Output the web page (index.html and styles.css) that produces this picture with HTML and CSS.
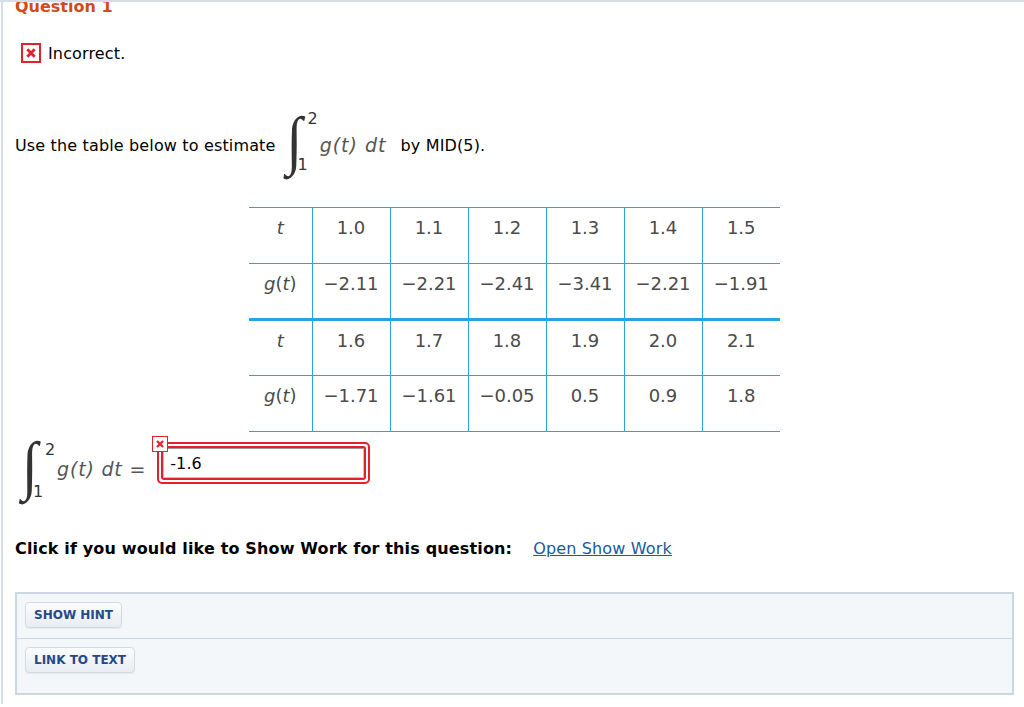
FILE: index.html
```html
<!DOCTYPE html>
<html>
<head>
<meta charset="utf-8">
<link rel="stylesheet" href="styles.css">
</head>
<body>
<div class="page">
  <div class="q-title">Question 1</div>

  <div class="status">
    <span class="x-box"><svg width="12" height="12" viewBox="0 0 12 12"><path d="M2.3 2.3 L9.7 9.7 M9.7 2.3 L2.3 9.7" stroke="#e1212b" stroke-width="2.8" stroke-linecap="butt"/></svg></span>
    <span class="status-text">Incorrect.</span>
  </div>

  <div class="prompt">
    <span class="prompt-text">Use the table below to estimate</span>
    <span class="integral small-int">
      <span class="int-sign">∫</span>
      <span class="limits"><span class="lim-up">2</span><span class="lim-lo">1</span></span>
      <span class="integrand">g(t) dt</span>
    </span>
    <span class="prompt-text">by MID(5).</span>
  </div>

  <div class="table-wrap">
    <table class="data">
      <colgroup><col class="c-head"><col class="c-val"><col class="c-val"><col class="c-val"><col class="c-val"><col class="c-val"><col class="c-val"></colgroup>
      <tr><td class="head"><i>t</i></td><td>1.0</td><td>1.1</td><td>1.2</td><td>1.3</td><td>1.4</td><td>1.5</td></tr>
      <tr class="split"><td class="head"><i>g</i>(<i>t</i>)</td><td>−2.11</td><td>−2.21</td><td>−2.41</td><td>−3.41</td><td>−2.21</td><td>−1.91</td></tr>
      <tr><td class="head"><i>t</i></td><td>1.6</td><td>1.7</td><td>1.8</td><td>1.9</td><td>2.0</td><td>2.1</td></tr>
      <tr><td class="head"><i>g</i>(<i>t</i>)</td><td>−1.71</td><td>−1.61</td><td>−0.05</td><td>0.5</td><td>0.9</td><td>1.8</td></tr>
    </table>
  </div>

  <div class="answer">
    <span class="integral big-int">
      <span class="int-sign">∫</span>
      <span class="limits"><span class="lim-up">2</span><span class="lim-lo">1</span></span>
      <span class="integrand">g(t) dt =</span>
    </span>
    <span class="field">
      <span class="field-inner"><span class="input">-1.6</span></span>
      <span class="mini-x"><svg width="10" height="10" viewBox="0 0 10 10"><path d="M2 2 L8 8 M8 2 L2 8" stroke="#e1212b" stroke-width="2.2"/></svg></span>
    </span>
  </div>

  <div class="showwork">
    <span class="sw-label">Click if you would like to Show Work for this question:</span>
    <a class="sw-link" href="#">Open Show Work</a>
  </div>

  <div class="panel">
    <div class="panel-row first"><span class="btn">SHOW HINT</span></div>
    <div class="panel-row last"><span class="btn">LINK TO TEXT</span></div>
  </div>
</div>
</body>
</html>
```

FILE: styles.css
```css
html, body {
  margin: 0;
  padding: 0;
  background: #ffffff;
}
body {
  border-top: 2px solid #d5dde6;
  height: 705px;
  overflow: hidden;
  font-family: "DejaVu Sans", Verdana, sans-serif;
  color: #000;
  letter-spacing: 0.15px;
}
.page {
  margin-left: 1px;
  border-left: 2px solid #d5dde6;
  padding: 0 10px 0 12px;
  height: 705px;
}
.q-title {
  font-weight: bold;
  font-size: 16px;
  line-height: 16px;
  height: 16px;
  color: #d24a1a;
  margin-top: -3px;
  letter-spacing: 0;
}
.status {
  display: flex;
  align-items: center;
  margin-top: 28px;
  margin-left: 6px;
  height: 20px;
}
.x-box {
  width: 16px;
  height: 16px;
  border: 2px solid #e1212b;
  display: flex;
  align-items: center;
  justify-content: center;
  background: #fff;
}
.status-text {
  font-size: 16px;
  margin-left: 7px;
}
.prompt {
  display: flex;
  align-items: center;
  margin-top: 47px;
  height: 70px;
}
.prompt-text {
  font-size: 16px;
}
.integral {
  display: inline-flex;
  align-items: center;
  color: #444;
  letter-spacing: 0;
}
.small-int {
  margin-left: 11px;
  margin-right: 14px;
}
.int-sign {
  font-family: "Liberation Serif", "Times New Roman", serif;
  font-size: 58px;
  line-height: 62px;
  height: 62px;
  display: inline-block;
  transform: scaleY(1.12);
  color: #333;
  margin-top: -8px;
}
.limits {
  display: inline-flex;
  flex-direction: column;
  justify-content: space-between;
  height: 62px;
  font-size: 16px;
  line-height: 16px;
  color: #333;
  margin-top: -6px;
}
.lim-up { margin-left: 5px; }
.lim-lo { margin-left: -5px; }
.integrand {
  font-size: 19px;
  font-style: italic;
  color: #555;
  margin-left: 2px;
  letter-spacing: 1px;
}
.table-wrap {
  display: flex;
  justify-content: center;
  margin-top: 27px;
}
.data {
  border-collapse: collapse;
  table-layout: fixed;
  width: 531px;
  font-family: "DejaVu Sans", sans-serif;
  font-size: 18px;
  color: #4a4a4a;
  letter-spacing: 0;
}
.c-head { width: 63px; }
.c-val { width: 78px; }
.data td {
  border: 1px solid #27a4e0;
  height: 56px;
  padding: 9px 0 0 0;
  vertical-align: top;
  text-align: center;
  line-height: 22px;
  box-sizing: border-box;
}
.data td:first-child { border-left: none; }
.data td:last-child { border-right: none; }
.data tr.split td { border-bottom: 3px solid #27a4e0; }
.answer {
  display: flex;
  align-items: center;
  margin-top: 4px;
  height: 54px;
  padding-left: 7px;
}
.big-int .int-sign { margin-top: 6px; }
.big-int .limits { height: 58px; margin-top: 16px; }
.big-int .lim-up { margin-left: 7px; }
.big-int .integrand { margin-top: 12px; letter-spacing: 0.8px; }
.field {
  position: relative;
  margin-left: 11px;
  display: inline-block;
  border: 2px solid #e1212b;
  border-radius: 5px;
  padding: 2px;
  background: #fff;
}
.field-inner {
  display: block;
  border: 2px solid #e1212b;
  border-radius: 3px;
}
.input {
  display: block;
  width: 193px;
  height: 28px;
  border: 1px solid #c4c4c4;
  border-top-color: #9a9a9a;
  padding: 0 0 0 6px;
  font-size: 16px;
  line-height: 30px;
  color: #000;
  font-family: "DejaVu Sans", sans-serif;
}
.mini-x {
  position: absolute;
  left: -7px;
  top: -8px;
  width: 14px;
  height: 14px;
  border: 1.5px solid #e1212b;
  background: #fff;
  display: flex;
  align-items: center;
  justify-content: center;
}
.showwork {
  display: flex;
  align-items: center;
  margin-top: 48px;
  height: 20px;
}
.sw-label {
  font-weight: bold;
  font-size: 16px;
}
.sw-link {
  font-size: 16px;
  color: #1b5a9a;
  margin-left: 21px;
  text-decoration: underline;
}
.panel {
  margin-top: 34px;
  border: 2px solid #ccd6e1;
  background: #f4f7fa;
}
.panel-row {
  display: flex;
  padding: 8px;
}
.panel-row.first {
  border-bottom: 1px solid #ccd6e1;
  height: 28px;
}
.panel-row.last {
  height: 38px;
}
.btn {
  display: inline-block;
  height: 24px;
  line-height: 24px;
  padding: 0 8px;
  border: 1px solid #d3dae2;
  border-radius: 4px;
  background: linear-gradient(#fbfcfd, #e9edf1);
  box-shadow: 0 1px 1px rgba(0,0,0,0.06);
  font-size: 12px;
  font-weight: bold;
  color: #234a86;
  letter-spacing: 0;
}
```
